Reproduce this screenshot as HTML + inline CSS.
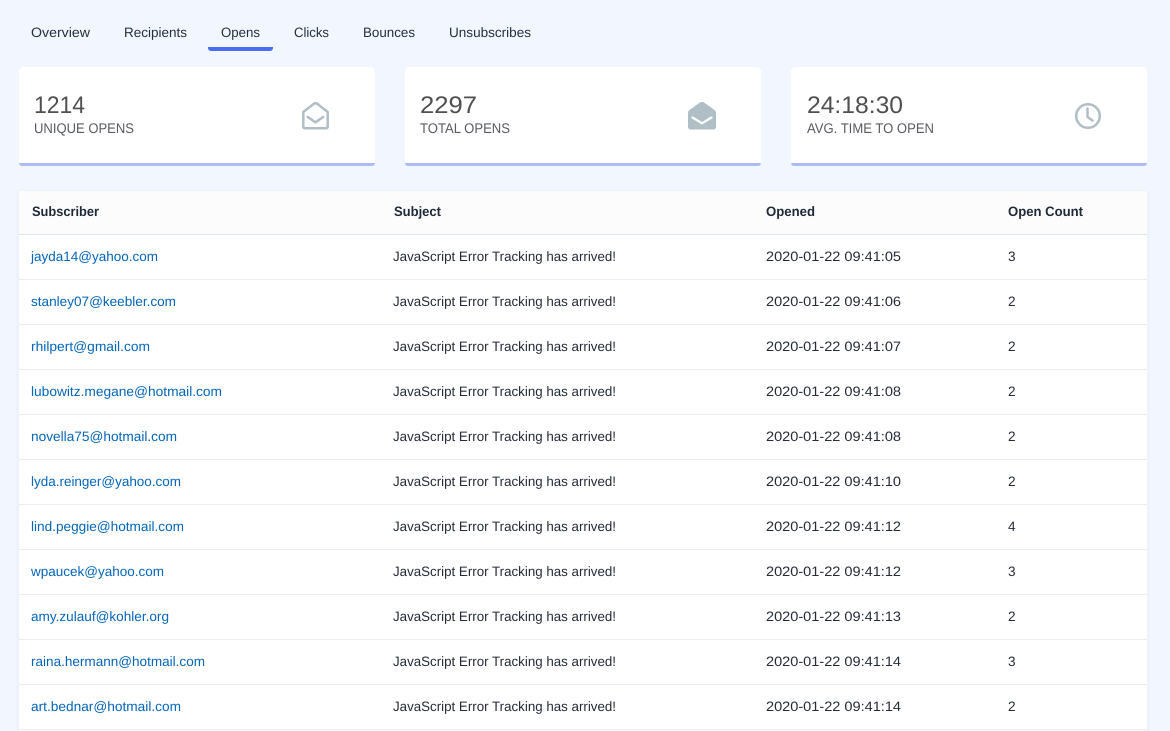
<!DOCTYPE html>
<html><head><meta charset="utf-8"><style>
html,body{margin:0;padding:0;width:1170px;height:731px;overflow:hidden;background:#f2f7ff}
svg{display:block}
text{font-family:"Liberation Sans",sans-serif;font-size:13.6px;fill:#252c38}
.t{font-size:13.6px;fill:#252f3f}
.h{font-weight:bold;fill:#1f2937}
.e{fill:#0566bb}
.n{font-size:24px;fill:#505050}
.l{font-size:14px;fill:#585c62}
.i{fill:none;stroke:#b0bec5;stroke-width:2.500;stroke-linejoin:round;stroke-linecap:round}
</style></head><body>
<svg width="1170" height="731" viewBox="0 0 1170 731" xmlns="http://www.w3.org/2000/svg" text-rendering="geometricPrecision">
<defs><filter id="s" x="-5%" y="-5%" width="110%" height="110%"><feDropShadow dx="0" dy="1" stdDeviation="3" flood-color="#8a9ab5" flood-opacity=".14"/></filter></defs>
<rect width="1170" height="731" fill="#f2f7ff"/>

<text class="t" x="31" y="37" textLength="59" lengthAdjust="spacingAndGlyphs">Overview</text>
<text class="t" x="124" y="37" textLength="63" lengthAdjust="spacingAndGlyphs">Recipients</text>
<text class="t" x="221" y="37" textLength="39" lengthAdjust="spacingAndGlyphs">Opens</text>
<text class="t" x="294" y="37" textLength="35" lengthAdjust="spacingAndGlyphs">Clicks</text>
<text class="t" x="363" y="37" textLength="52" lengthAdjust="spacingAndGlyphs">Bounces</text>
<text class="t" x="449" y="37" textLength="82" lengthAdjust="spacingAndGlyphs">Unsubscribes</text>
<path d="M208 47h65v1a3 3 0 0 1-3 3h-59a3 3 0 0 1-3-3z" fill="#4a6cf7"/>

<rect x="19" y="67" width="356" height="99" rx="3" fill="#aebcf6"/>
<rect x="405" y="67" width="356" height="99" rx="3" fill="#aebcf6"/>
<rect x="791" y="67" width="356" height="99" rx="3" fill="#aebcf6"/>
<path d="M22 67h350a3 3 0 0 1 3 3v93h-356v-93a3 3 0 0 1 3-3z" fill="#fff"/>
<path d="M408 67h350a3 3 0 0 1 3 3v93h-356v-93a3 3 0 0 1 3-3z" fill="#fff"/>
<path d="M794 67h350a3 3 0 0 1 3 3v93h-356v-93a3 3 0 0 1 3-3z" fill="#fff"/>

<text class="n" x="34" y="113" textLength="51" lengthAdjust="spacingAndGlyphs">1214</text>
<text class="l" x="34" y="133" textLength="100" lengthAdjust="spacingAndGlyphs">UNIQUE OPENS</text>
<text class="n" x="420" y="113" textLength="57" lengthAdjust="spacingAndGlyphs">2297</text>
<text class="l" x="420" y="133" textLength="90" lengthAdjust="spacingAndGlyphs">TOTAL OPENS</text>
<text class="n" x="807" y="113" textLength="96" lengthAdjust="spacingAndGlyphs">24:18:30</text>
<text class="l" x="807" y="133" textLength="127" lengthAdjust="spacingAndGlyphs">AVG. TIME TO OPEN</text>

<path class="i" d="M303.300 112L313.800 103.800Q315.500 102.800 317.200 103.800L327.700 112V126.200Q327.700 128.300 325.700 128.300H305.300Q303.300 128.300 303.300 126.200Z"/>
<path class="i" d="M307.800 117L315.500 122.300L323.200 117" stroke-width="2.200"/>
<path d="M688 113Q688 111 689.500 110L700 102.500Q702 101.300 704 102.500L714.500 110Q716 111 716 113V126.500Q716 129.500 713 129.500H691Q688 129.500 688 126.500Z" fill="#b0bec5"/>
<path d="M692.500 117.500L702 123.300L711.500 117.500" fill="none" stroke="#fff" stroke-width="2.200" stroke-linecap="round" stroke-linejoin="round"/>
<circle class="i" cx="1088" cy="116" r="11.800"/>
<path class="i" d="M1087.500 108.500V117L1092.500 120.500" stroke-width="2.400"/>

<rect x="19" y="191" width="1128" height="560" fill="#fff" filter="url(#s)"/>
<rect x="19" y="191" width="1128" height="43" fill="#fcfcfd"/>
<rect x="19" y="234" width="1128" height="1" fill="#dde3ea"/>
<g fill="#e9edf2">
<rect x="19" y="279" width="1128" height="1"/><rect x="19" y="324" width="1128" height="1"/><rect x="19" y="369" width="1128" height="1"/><rect x="19" y="414" width="1128" height="1"/><rect x="19" y="459" width="1128" height="1"/><rect x="19" y="504" width="1128" height="1"/><rect x="19" y="549" width="1128" height="1"/><rect x="19" y="594" width="1128" height="1"/><rect x="19" y="639" width="1128" height="1"/><rect x="19" y="684" width="1128" height="1"/><rect x="19" y="729" width="1128" height="1"/>
</g>

<text class="h" x="32" y="216" textLength="67" lengthAdjust="spacingAndGlyphs">Subscriber</text>
<text class="h" x="394" y="216" textLength="47" lengthAdjust="spacingAndGlyphs">Subject</text>
<text class="h" x="766" y="216" textLength="49" lengthAdjust="spacingAndGlyphs">Opened</text>
<text class="h" x="1008" y="216" textLength="75" lengthAdjust="spacingAndGlyphs">Open Count</text>

<text class="e" x="31" y="261" textLength="127" lengthAdjust="spacingAndGlyphs">jayda14@yahoo.com</text>
<text x="393" y="261" textLength="223" lengthAdjust="spacingAndGlyphs">JavaScript Error Tracking has arrived!</text>
<text x="766" y="261" textLength="135" lengthAdjust="spacingAndGlyphs">2020-01-22 09:41:05</text>
<text x="1008" y="261">3</text>

<text class="e" x="31" y="306" textLength="145" lengthAdjust="spacingAndGlyphs">stanley07@keebler.com</text>
<text x="393" y="306" textLength="223" lengthAdjust="spacingAndGlyphs">JavaScript Error Tracking has arrived!</text>
<text x="766" y="306" textLength="135" lengthAdjust="spacingAndGlyphs">2020-01-22 09:41:06</text>
<text x="1008" y="306">2</text>

<text class="e" x="31" y="351" textLength="119" lengthAdjust="spacingAndGlyphs">rhilpert@gmail.com</text>
<text x="393" y="351" textLength="223" lengthAdjust="spacingAndGlyphs">JavaScript Error Tracking has arrived!</text>
<text x="766" y="351" textLength="135" lengthAdjust="spacingAndGlyphs">2020-01-22 09:41:07</text>
<text x="1008" y="351">2</text>

<text class="e" x="31" y="396" textLength="191" lengthAdjust="spacingAndGlyphs">lubowitz.megane@hotmail.com</text>
<text x="393" y="396" textLength="223" lengthAdjust="spacingAndGlyphs">JavaScript Error Tracking has arrived!</text>
<text x="766" y="396" textLength="135" lengthAdjust="spacingAndGlyphs">2020-01-22 09:41:08</text>
<text x="1008" y="396">2</text>

<text class="e" x="31" y="441" textLength="146" lengthAdjust="spacingAndGlyphs">novella75@hotmail.com</text>
<text x="393" y="441" textLength="223" lengthAdjust="spacingAndGlyphs">JavaScript Error Tracking has arrived!</text>
<text x="766" y="441" textLength="135" lengthAdjust="spacingAndGlyphs">2020-01-22 09:41:08</text>
<text x="1008" y="441">2</text>

<text class="e" x="31" y="486" textLength="150" lengthAdjust="spacingAndGlyphs">lyda.reinger@yahoo.com</text>
<text x="393" y="486" textLength="223" lengthAdjust="spacingAndGlyphs">JavaScript Error Tracking has arrived!</text>
<text x="766" y="486" textLength="135" lengthAdjust="spacingAndGlyphs">2020-01-22 09:41:10</text>
<text x="1008" y="486">2</text>

<text class="e" x="31" y="531" textLength="153" lengthAdjust="spacingAndGlyphs">lind.peggie@hotmail.com</text>
<text x="393" y="531" textLength="223" lengthAdjust="spacingAndGlyphs">JavaScript Error Tracking has arrived!</text>
<text x="766" y="531" textLength="135" lengthAdjust="spacingAndGlyphs">2020-01-22 09:41:12</text>
<text x="1008" y="531">4</text>

<text class="e" x="31" y="576" textLength="133" lengthAdjust="spacingAndGlyphs">wpaucek@yahoo.com</text>
<text x="393" y="576" textLength="223" lengthAdjust="spacingAndGlyphs">JavaScript Error Tracking has arrived!</text>
<text x="766" y="576" textLength="135" lengthAdjust="spacingAndGlyphs">2020-01-22 09:41:12</text>
<text x="1008" y="576">3</text>

<text class="e" x="31" y="621" textLength="138" lengthAdjust="spacingAndGlyphs">amy.zulauf@kohler.org</text>
<text x="393" y="621" textLength="223" lengthAdjust="spacingAndGlyphs">JavaScript Error Tracking has arrived!</text>
<text x="766" y="621" textLength="135" lengthAdjust="spacingAndGlyphs">2020-01-22 09:41:13</text>
<text x="1008" y="621">2</text>

<text class="e" x="31" y="666" textLength="174" lengthAdjust="spacingAndGlyphs">raina.hermann@hotmail.com</text>
<text x="393" y="666" textLength="223" lengthAdjust="spacingAndGlyphs">JavaScript Error Tracking has arrived!</text>
<text x="766" y="666" textLength="135" lengthAdjust="spacingAndGlyphs">2020-01-22 09:41:14</text>
<text x="1008" y="666">3</text>

<text class="e" x="31" y="711" textLength="150" lengthAdjust="spacingAndGlyphs">art.bednar@hotmail.com</text>
<text x="393" y="711" textLength="223" lengthAdjust="spacingAndGlyphs">JavaScript Error Tracking has arrived!</text>
<text x="766" y="711" textLength="135" lengthAdjust="spacingAndGlyphs">2020-01-22 09:41:14</text>
<text x="1008" y="711">2</text>
</svg>
</body></html>
